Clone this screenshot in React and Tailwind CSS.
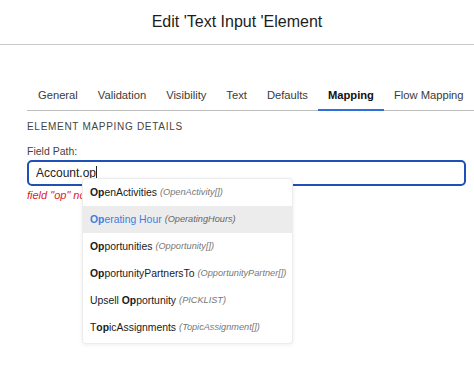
import React from "react";

const tabs = ["General", "Validation", "Visibility", "Text", "Defaults", "Mapping", "Flow Mapping"];

const options = [
  { pre: "", bold: "Op", rest: "enActivities", type: "OpenActivity[]" },
  { pre: "", bold: "Op", rest: "erating Hour", type: "OperatingHours", active: true },
  { pre: "", bold: "Op", rest: "portunities", type: "Opportunity[]" },
  { pre: "", bold: "Op", rest: "portunityPartnersTo", type: "OpportunityPartner[]" },
  { pre: "Upsell ", bold: "Op", rest: "portunity", type: "PICKLIST" },
  { pre: "T", bold: "op", rest: "icAssignments", type: "TopicAssignment[]" },
];

const App = () => {
  return (
    <div className="w-[474px] h-[365px] bg-white overflow-hidden font-['Liberation_Sans',Arial,sans-serif] text-[#1d1d1d]">
      <div className="h-[45px] flex items-center justify-center border-b border-[#c8c8c8]">
        <h1 className="text-[16px] leading-[20px] pb-[1px]">Edit 'Text Input 'Element</h1>
      </div>

      <div className="pl-[27px] pt-[43px]">
        <div className="flex border-b border-[#bdbdbd] text-[11.2px] leading-[14px] text-[#3a3a3a] whitespace-nowrap">
          {tabs.map((t) => (
            <div
              key={t}
              className={`px-[10px] first:pl-[11px] pb-[7px] -mb-px border-b-2 ${
                t === "Mapping" ? "border-[#2f6fdb] font-bold text-[#111]" : "border-transparent"
              }`}
            >
              {t}
            </div>
          ))}
        </div>

        <div className="pr-[8px]">
          <div className="mt-[10px] text-[10px] leading-[12px] tracking-[0.7px] text-[#444]">ELEMENT MAPPING DETAILS</div>
          <div className="mt-[12px] text-[10.5px] leading-[12px] text-[#444]">Field Path:</div>

          <div className="relative mt-[3px]">
            <div className="h-[26px] border-2 border-[#1f50b8] rounded-[5px] flex items-center pl-[7px] text-[12px] text-[#222]">
              Account.op<span className="w-[1px] h-[15px] bg-[#222]"></span>
            </div>
            <div className="mt-[3px] text-[11px] leading-[13px] italic text-[#e0202c]">field "op" not found</div>

            <div className="absolute left-[55px] top-[18px] w-[211px] bg-white border border-[#ececec] rounded-[4px] shadow-[0_1px_4px_rgba(0,0,0,0.07)] pb-[2px]">
              {options.map((o, i) => (
                <div
                  key={i}
                  className={`h-[27px] flex items-center pl-[7px] text-[10.4px] whitespace-nowrap ${
                    o.active ? "bg-[#ececec] text-[#3d7fe0]" : "text-[#1a1a1a]"
                  }`}
                >
                  <span>
                    {o.pre}
                    <span className="font-bold">{o.bold}</span>
                    {o.rest}
                  </span>
                  <span className={`ml-[3px] text-[9.2px] italic ${o.active ? "text-[#666]" : "text-[#777]"}`}>
                    ({o.type})
                  </span>
                </div>
              ))}
            </div>
          </div>
        </div>
      </div>
    </div>
  );
};

export default App;
